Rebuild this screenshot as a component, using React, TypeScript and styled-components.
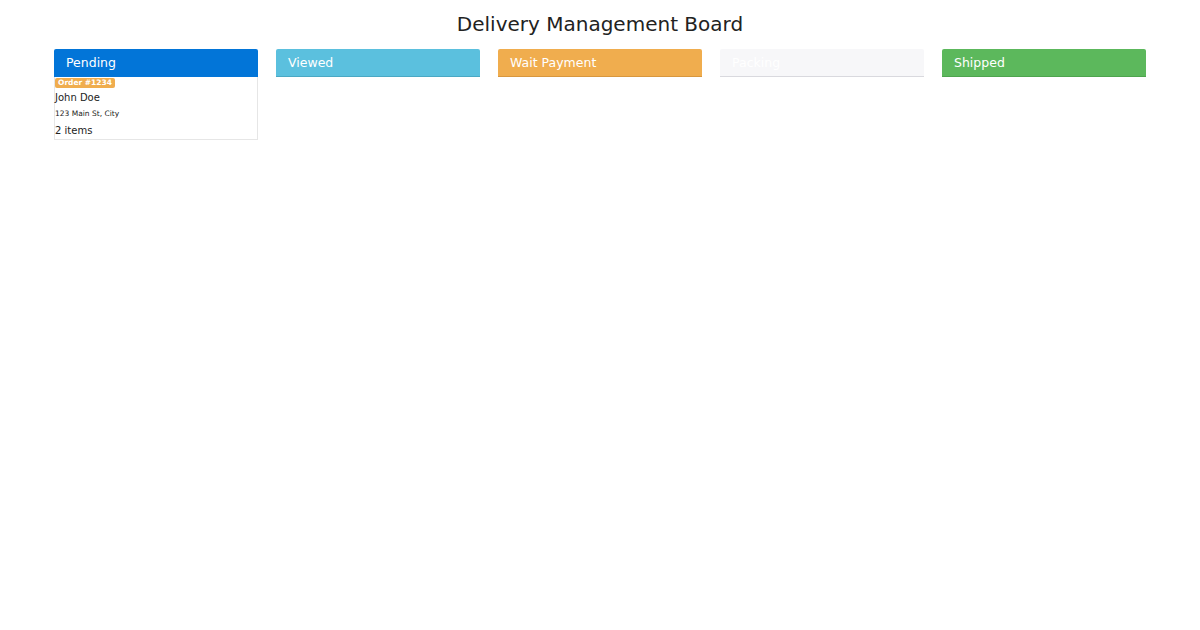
import styled, { createGlobalStyle } from "styled-components";

const GlobalStyle = createGlobalStyle`
  body {
    margin: 0;
    background: #fff;
    font-family: "DejaVu Sans", sans-serif;
    color: #222;
  }
`;

const Page = styled.div`
  padding: 12px 54px;
`;

const Title = styled.h1`
  margin: 0 0 13px;
  text-align: center;
  font-size: 20px;
  font-weight: 400;
  line-height: 24px;
`;

const Board = styled.div`
  display: grid;
  grid-template-columns: repeat(5, 1fr);
  gap: 18px;
`;

const Column = styled.div`
  display: flex;
  flex-direction: column;
`;

const Header = styled.div<{ $bg: string; $border: string }>`
  height: 27px;
  line-height: 27px;
  padding-left: 12px;
  background: ${(p) => p.$bg};
  border-bottom: 1px solid ${(p) => p.$border};
  color: #fff;
  font-size: 12.5px;
  border-radius: 2px 2px 0 0;
`;

const Card = styled.div`
  border: 1px solid #e6e6e6;
  border-top: none;
  padding: 1px 0 0;
  display: flex;
  flex-direction: column;
  align-items: flex-start;
`;

const Badge = styled.span`
  background: #f0ad4e;
  color: #fff;
  font-size: 7.5px;
  font-weight: bold;
  padding: 0 3px;
  line-height: 10px;
  border-radius: 2px;
`;

const Name = styled.div`
  font-size: 10px;
  line-height: 16px;
  margin-top: 2px;
`;

const Address = styled.div`
  font-size: 7.5px;
  line-height: 16px;
`;

const Items = styled.div`
  font-size: 10px;
  line-height: 17px;
`;

const columns = [
  { name: "Pending", bg: "#0275d8", border: "#0275d8" },
  { name: "Viewed", bg: "#5bc0de", border: "#4aa8c4" },
  { name: "Wait Payment", bg: "#f0ad4e", border: "#d8973e" },
  { name: "Packing", bg: "#f7f7f9", border: "#d9d9de" },
  { name: "Shipped", bg: "#5cb85c", border: "#4ea44e" },
];

export default function App() {
  return (
    <Page>
      <GlobalStyle />
      <Title>Delivery Management Board</Title>
      <Board>
        {columns.map((c, i) => (
          <Column key={c.name}>
            <Header $bg={c.bg} $border={c.border}>{c.name}</Header>
            {i === 0 && (
              <Card>
                <Badge>Order #1234</Badge>
                <Name>John Doe</Name>
                <Address>123 Main St, City</Address>
                <Items>2 items</Items>
              </Card>
            )}
          </Column>
        ))}
      </Board>
    </Page>
  );
}
